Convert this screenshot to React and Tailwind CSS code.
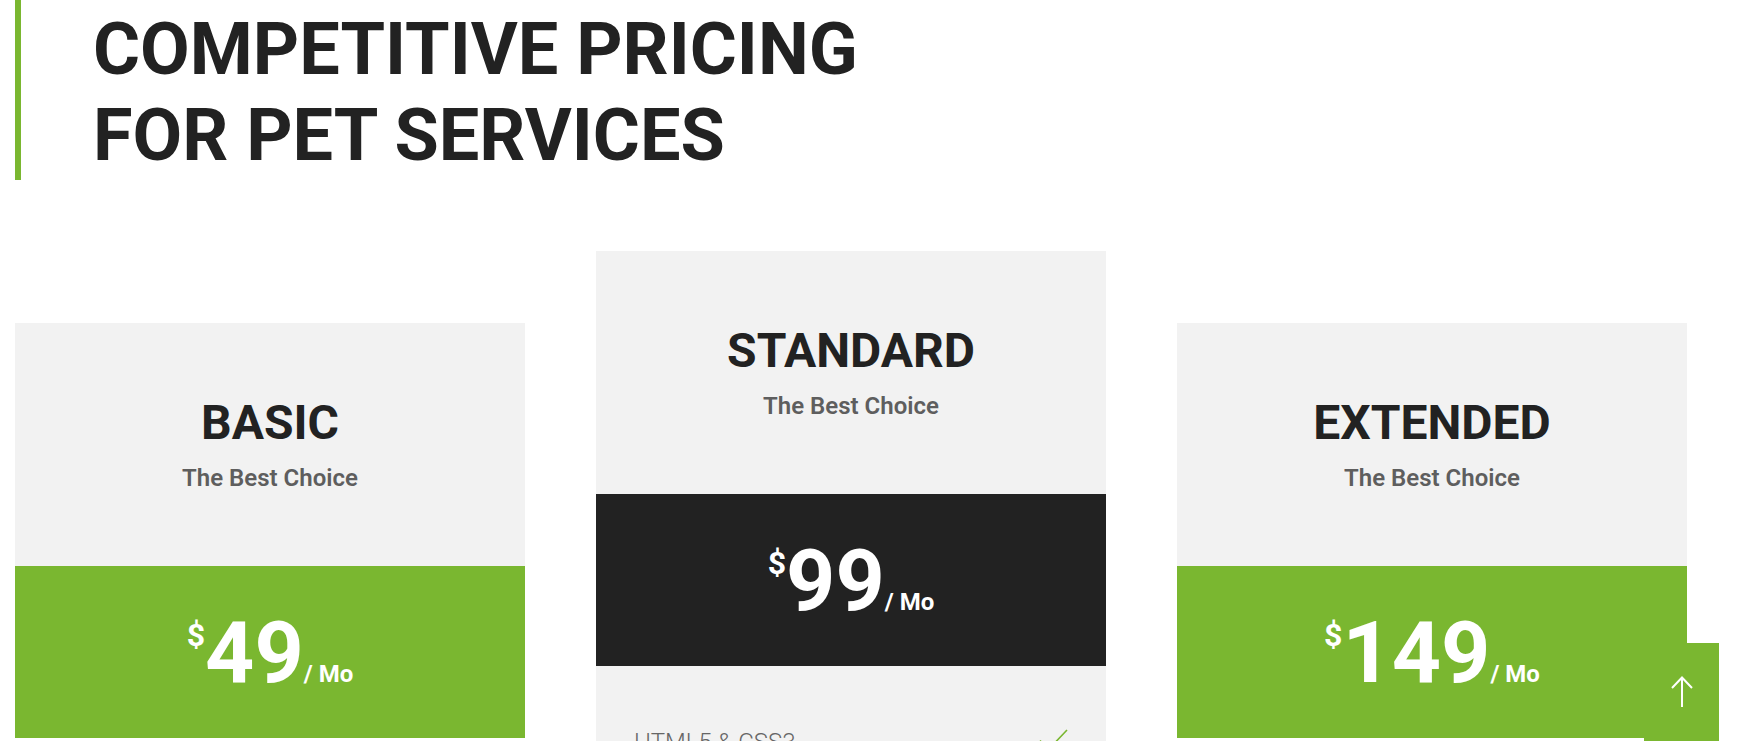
const plans = [
  { name: "BASIC", price: "49", tone: "green", raised: false },
  { name: "STANDARD", price: "99", tone: "dark", raised: true },
  { name: "EXTENDED", price: "149", tone: "green", raised: false },
];

const features = ["HTML5 & CSS3", "Bootstrap 4", "Responsive", "Support"];

function CheckMark() {
  return (
    <svg width="29" height="22" viewBox="0 0 29 22" fill="none" stroke="#7ab730" strokeWidth="1.6" className="-mt-[4px]">
      <path d="M1 11.5L9.5 20.5L28 1" />
    </svg>
  );
}

function PlanCard({ plan }) {
  return (
    <div className={`w-[510px] shrink-0 ${plan.raised ? "" : "mt-[72px]"}`}>
      {/* nom + sous-titre */}
      <div className="h-[243px] bg-[#f2f2f2] pt-[71px] text-center">
        <h3 className="text-[48px] leading-[58px] font-bold text-[#222222]">{plan.name}</h3>
        <p className="mt-[8px] text-[24px] leading-[36px] font-semibold text-[#5e5e5e]">The Best Choice</p>
      </div>

      {/* prix */}
      <div
        className={`h-[172px] pt-[44px] flex justify-center items-baseline text-white font-bold ${
          plan.tone === "dark" ? "bg-[#222222]" : "bg-[#7ab730]"
        }`}
      >
        <span className="self-start mt-[9px] text-[32px] leading-none">$</span>
        <span className="text-[86px] leading-none">{plan.price}</span>
        <span className="text-[24px] leading-none">/ Mo</span>
      </div>

      {/* liste */}
      <ul className={`pt-[58px] px-[38px] ${plan.raised ? "bg-[#f2f2f2]" : "bg-white"}`}>
        {features.map((f) => (
          <li key={f} className="flex items-center justify-between pb-[20px]">
            <span className="text-[24px] leading-[36px] font-light text-[#666666]">{f}</span>
            <CheckMark />
          </li>
        ))}
      </ul>
    </div>
  );
}

export default function App() {
  return (
    <div className="relative h-[741px] overflow-hidden bg-white font-['Roboto',sans-serif]">
      <div className="ml-[15px] border-l-[6px] border-[#7ab730] pl-[72px] pt-[7px]">
        <h2 className="text-[72px] leading-[1.2] font-bold text-[#222222]">
          COMPETITIVE PRICING
          <br />
          FOR PET SERVICES
        </h2>
      </div>

      <div className="flex items-start gap-[71px] pl-[15px] mt-[71px]">
        {plans.map((p) => (
          <PlanCard key={p.name} plan={p} />
        ))}
      </div>

      {/* bouton retour en haut */}
      <button className="absolute left-[1644px] top-[643px] w-[75px] h-[98px] bg-[#7ab730] flex items-center justify-center">
        <svg width="22" height="32" viewBox="0 0 22 32" fill="none" stroke="white" strokeWidth="2">
          <path d="M11 31V1.5M1 12L11 1.5L21 12" />
        </svg>
      </button>
    </div>
  );
}
